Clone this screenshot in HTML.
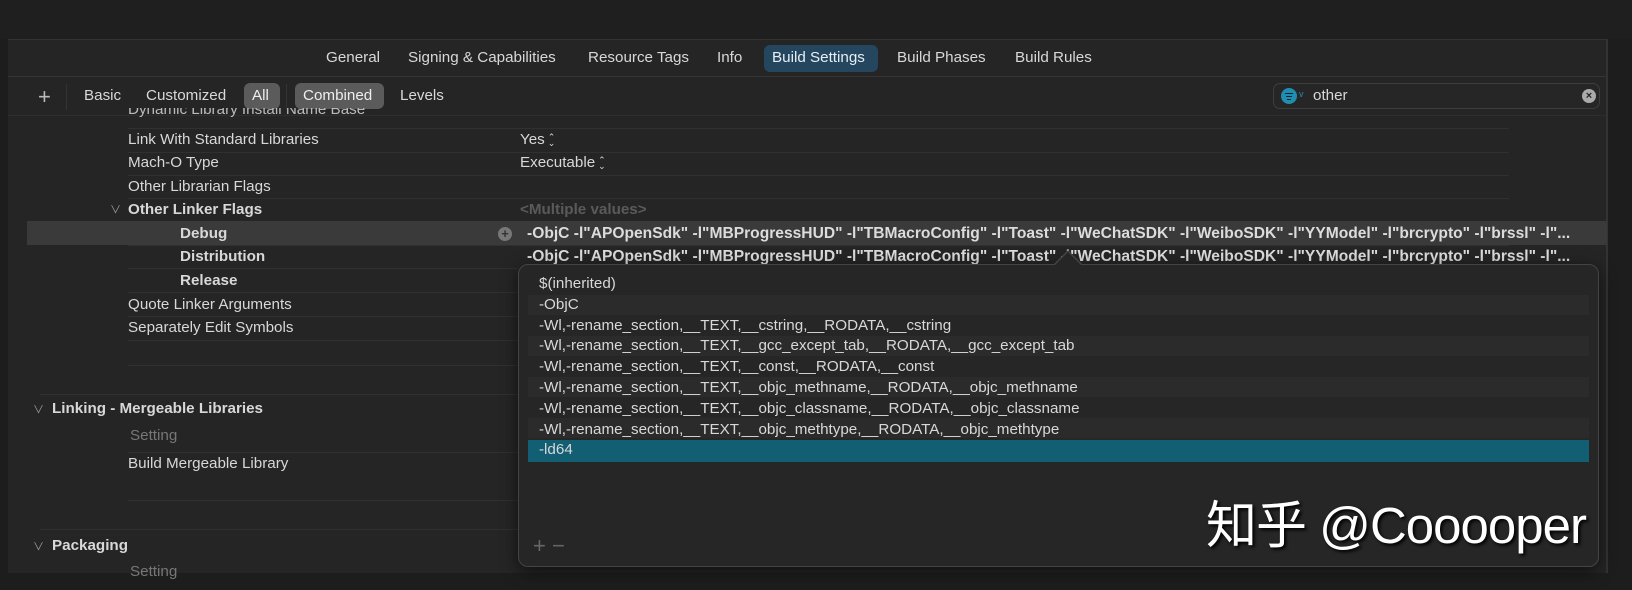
<!DOCTYPE html>
<html><head><style>
*{margin:0;padding:0;box-sizing:border-box}
body{width:1632px;height:590px;background:#1d1d1d;font-family:"Liberation Sans","Noto Sans CJK SC",sans-serif;font-size:15.2px;color:#d8d8d8;position:relative;overflow:hidden}
.a{position:absolute;white-space:nowrap}
.win{position:absolute;left:8px;top:0;width:1600px;height:573px;background:#252525}
.top{position:absolute;left:0;top:0;width:1632px;height:39px;background:#1f1f1f}
.hl{position:absolute;height:1px;background:#343434}
.b{font-weight:bold}
.g{color:#777}
.pill{position:absolute;border-radius:6px;background:#5b5b5b}
.row{position:absolute;height:1px;background:#303030}
.mono{font-weight:bold;color:#dcdcdc;font-size:15.6px}
.ud{display:inline-block;font-size:9px;line-height:6px;vertical-align:middle;margin-left:3px}
</style></head><body>
<div class="win"></div>
<div class="top"></div>
<div class="hl" style="left:8px;top:39px;width:1600px"></div>
<div class="hl" style="left:8px;top:76px;width:1600px"></div>
<div class="hl" style="left:8px;top:115px;width:1600px;background:#2e2e2e"></div>
<div class="a" style="left:1606px;top:39px;width:2px;height:534px;background:#333"></div>

<div class="pill" style="left:764px;top:45px;width:114px;height:27px;background:#24465e"></div>
<div class="a" style="left:326px;top:49px">General</div>
<div class="a" style="left:408px;top:49px">Signing &amp; Capabilities</div>
<div class="a" style="left:588px;top:49px">Resource Tags</div>
<div class="a" style="left:717px;top:49px">Info</div>
<div class="a" style="left:772px;top:49px;color:#e8eef3">Build Settings</div>
<div class="a" style="left:897px;top:49px">Build Phases</div>
<div class="a" style="left:1015px;top:49px">Build Rules</div>

<div class="a" style="left:38px;top:84px;font-size:22px;color:#bbb;font-weight:300">+</div>
<div class="a" style="left:66px;top:84px;width:1px;height:26px;background:#333"></div>
<div class="a" style="left:84px;top:87px">Basic</div>
<div class="a" style="left:146px;top:87px">Customized</div>
<div class="pill" style="left:244px;top:83px;width:36px;height:26px"></div>
<div class="a" style="left:252px;top:87px;color:#eee">All</div>
<div class="a" style="left:286px;top:84px;width:1px;height:26px;background:#333"></div>
<div class="pill" style="left:295px;top:83px;width:89px;height:26px"></div>
<div class="a" style="left:303px;top:87px;color:#eee">Combined</div>
<div class="a" style="left:400px;top:87px">Levels</div>

<div class="a" style="left:1273px;top:83px;width:327px;height:26px;border:1px solid #3d3d3d;border-radius:7px;background:#262626"></div>
<div class="a" style="left:1281px;top:88px;width:16px;height:16px;border-radius:50%;background:#1e8fb0"></div>
<div class="a" style="left:1285px;top:93px;width:8px;height:1px;background:#123"></div>
<div class="a" style="left:1286px;top:96px;width:6px;height:1px;background:#123"></div>
<div class="a" style="left:1287px;top:99px;width:4px;height:1px;background:#123"></div>
<div class="a" style="left:1299px;top:89px;font-size:9px;color:#1e8fb0">v</div>
<div class="a" style="left:1313px;top:87px">other</div>
<div class="a" style="left:1582px;top:89px;width:14px;height:14px;border-radius:50%;background:#aaa;color:#252525;font-size:11px;line-height:14px;text-align:center;font-weight:bold">×</div>

<div class="a" style="left:128px;top:108px;color:#bbb;height:10px;overflow:hidden;line-height:4px">Dynamic Library Install Name Base</div>
<div class="a" style="left:27px;top:221px;width:1580px;height:24px;background:#3a3a3a"></div>
<div class="row" style="left:128px;top:128px;width:1381px"></div>
<div class="row" style="left:128px;top:152px;width:1381px"></div>
<div class="row" style="left:128px;top:175px;width:1381px"></div>
<div class="row" style="left:128px;top:198px;width:1381px"></div>
<div class="row" style="left:128px;top:245px;width:1381px"></div>
<div class="row" style="left:128px;top:268px;width:390px"></div>
<div class="row" style="left:128px;top:292px;width:390px"></div>
<div class="row" style="left:128px;top:316px;width:390px"></div>
<div class="row" style="left:128px;top:340px;width:390px"></div>
<div class="row" style="left:128px;top:365px;width:390px"></div>
<div class="row" style="left:40px;top:394px;width:478px"></div>
<div class="row" style="left:128px;top:452px;width:390px"></div>
<div class="row" style="left:128px;top:500px;width:390px"></div>
<div class="row" style="left:40px;top:529px;width:478px"></div>

<div class="a" style="left:128px;top:131px">Link With Standard Libraries</div>
<div class="a" style="left:520px;top:131px">Yes<span class="ud">⌃<br>⌄</span></div>
<div class="a" style="left:128px;top:154px">Mach-O Type</div>
<div class="a" style="left:520px;top:154px">Executable<span class="ud">⌃<br>⌄</span></div>
<div class="a" style="left:128px;top:178px">Other Librarian Flags</div>
<div class="a" style="left:110px;top:201px;font-size:11px;color:#999">∨</div>
<div class="a b" style="left:128px;top:201px">Other Linker Flags</div>
<div class="a b g" style="left:520px;top:201px;color:#5a5a5a">&lt;Multiple values&gt;</div>
<div class="a b" style="left:180px;top:225px">Debug</div>
<div class="a" style="left:498px;top:227px;width:14px;height:14px;border-radius:50%;background:#777;color:#333;font-size:13px;line-height:13px;text-align:center;font-weight:bold">+</div>
<div class="a mono" style="left:527px;top:225px">-ObjC -l"APOpenSdk" -l"MBProgressHUD" -l"TBMacroConfig" -l"Toast" -l"WeChatSDK" -l"WeiboSDK" -l"YYModel" -l"brcrypto" -l"brssl" -l"...</div>
<div class="a b" style="left:180px;top:248px">Distribution</div>
<div class="a mono" style="left:527px;top:248px">-ObjC -l"APOpenSdk" -l"MBProgressHUD" -l"TBMacroConfig" -l"Toast" -l"WeChatSDK" -l"WeiboSDK" -l"YYModel" -l"brcrypto" -l"brssl" -l"...</div>
<div class="a b" style="left:180px;top:272px">Release</div>
<div class="a" style="left:128px;top:296px">Quote Linker Arguments</div>
<div class="a" style="left:128px;top:319px">Separately Edit Symbols</div>
<div class="a" style="left:33px;top:401px;font-size:11px;color:#999">∨</div>
<div class="a b" style="left:52px;top:400px">Linking - Mergeable Libraries</div>
<div class="a g" style="left:130px;top:427px">Setting</div>
<div class="a" style="left:128px;top:455px">Build Mergeable Library</div>
<div class="a" style="left:33px;top:538px;font-size:11px;color:#999">∨</div>
<div class="a b" style="left:52px;top:537px">Packaging</div>
<div class="a g" style="left:130px;top:563px">Setting</div>

<div class="a" style="left:518px;top:264px;width:1081px;height:303px;background:#262626;border:1px solid #444;border-radius:10px;box-shadow:0 4px 16px rgba(0,0,0,.6)"></div>
<div class="a" style="left:1054px;top:250px;width:0;height:0;border-left:14px solid transparent;border-right:14px solid transparent;border-bottom:14px solid #444"></div>
<div class="a" style="left:1055px;top:252px;width:0;height:0;border-left:13px solid transparent;border-right:13px solid transparent;border-bottom:13px solid #262626"></div>
<div class="a" style="left:528px;top:295px;width:1061px;height:20px;background:#2b2b2b"></div>
<div class="a" style="left:528px;top:336px;width:1061px;height:20px;background:#2b2b2b"></div>
<div class="a" style="left:528px;top:377px;width:1061px;height:20px;background:#2b2b2b"></div>
<div class="a" style="left:528px;top:418px;width:1061px;height:20px;background:#2b2b2b"></div>
<div class="a" style="left:528px;top:440px;width:1061px;height:22px;background:#125e73"></div>
<div class="a" style="left:539px;top:274px;line-height:20.8px;font-size:15.2px">$(inherited)<br>-ObjC<br>-Wl,-rename_section,__TEXT,__cstring,__RODATA,__cstring<br>-Wl,-rename_section,__TEXT,__gcc_except_tab,__RODATA,__gcc_except_tab<br>-Wl,-rename_section,__TEXT,__const,__RODATA,__const<br>-Wl,-rename_section,__TEXT,__objc_methname,__RODATA,__objc_methname<br>-Wl,-rename_section,__TEXT,__objc_classname,__RODATA,__objc_classname<br>-Wl,-rename_section,__TEXT,__objc_methtype,__RODATA,__objc_methtype<br>-ld64</div>
<div class="a" style="left:533px;top:533px;font-size:22px;color:#666">+ −</div>
<div class="a" style="left:1206px;top:484px;font-size:51px;color:#fff;text-shadow:2px 2px 3px #000;letter-spacing:-1px">知乎 @Cooooper</div>
</body></html>
